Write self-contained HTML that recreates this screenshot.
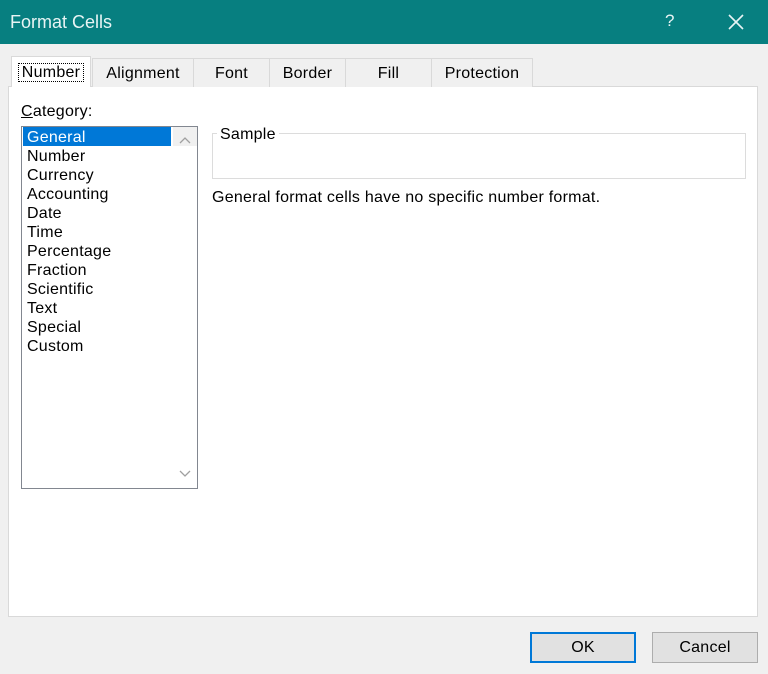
<!DOCTYPE html>
<html><head><meta charset="utf-8"><style>
*{margin:0;padding:0;box-sizing:border-box}
body{width:768px;height:674px;background:#f0f0f0;font-family:"Liberation Sans",sans-serif;font-size:16px;letter-spacing:0.25px;color:#000;position:relative;overflow:hidden}
.title{position:absolute;left:0;top:0;width:768px;height:44px;background:#077f80;color:#e8f4f4;font-size:18px;letter-spacing:0}
.title .t{position:absolute;left:10px;top:12px}
.title .q{position:absolute;left:665px;top:11px;font-size:17px}
.title svg{position:absolute;left:728px;top:14px}
.panel{position:absolute;left:8px;top:86px;width:750px;height:531px;background:#fff;border:1px solid #d9d9d9}
.tab{position:absolute;top:58px;height:29px;border:1px solid #d9d9d9;border-bottom:none;background:#f0f0f0;text-align:center;line-height:30px;font-size:16px}
.tab.sel{top:56px;height:31px;background:#fff;z-index:2;line-height:31px}
.tab.sel span{border:1px dotted #000;padding:0 3px}
.abs{position:absolute}
.list{position:absolute;left:21px;top:126px;width:177px;height:363px;border:1px solid #828790;background:#fff}
.list div{height:19px;line-height:19px;padding-left:5px;padding-top:1px}
.list .s{background:#0078d7;color:#fff;width:148px;margin-left:1px;padding-left:4px}
.sb{position:absolute;right:0;top:0;width:24px;height:361px;background:#f0f0f0;padding:0 !important}
.btn{position:absolute;top:632px;height:31px;width:106px;background:#e1e1e1;border:1px solid #adadad;text-align:center;line-height:30px}
</style></head><body>
<div class="title"><span class="t">Format Cells</span><span class="q">?</span>
<svg width="16" height="16" viewBox="0 0 16 16"><path d="M1 1L15 15M15 1L1 15" stroke="#e8f4f4" stroke-width="1.6"/></svg></div>
<div class="panel"></div>
<div class="tab sel" style="left:11px;width:80px"><span>Number</span></div>
<div class="tab" style="left:92px;width:102px">Alignment</div>
<div class="tab" style="left:193px;width:77px">Font</div>
<div class="tab" style="left:269px;width:77px">Border</div>
<div class="tab" style="left:345px;width:87px">Fill</div>
<div class="tab" style="left:431px;width:102px">Protection</div>
<div class="abs" style="left:21px;top:103px"><u>C</u>ategory:</div>
<div class="list">
<div class="s">General</div><div>Number</div><div>Currency</div><div>Accounting</div><div>Date</div><div>Time</div><div>Percentage</div><div>Fraction</div><div>Scientific</div><div>Text</div><div>Special</div><div>Custom</div>
<div class="sb"><svg style="position:absolute;left:6px;top:9px" width="12" height="8"><path d="M1 7L6 2L11 7" stroke="#a0a0a0" fill="none" stroke-width="1.3"/></svg>
<svg style="position:absolute;left:6px;top:343px" width="12" height="8"><path d="M1 1L6 6L11 1" stroke="#a0a0a0" fill="none" stroke-width="1.3"/></svg></div>
</div>
<div class="abs" style="left:212px;top:133px;width:534px;height:46px;border:1px solid #dcdcdc"></div>
<div class="abs" style="left:217px;top:126px;background:#fff;padding:0 3px">Sample</div>
<div class="abs" style="left:212px;top:189px">General format cells have no specific number format.</div>
<div class="btn" style="left:530px;border:2px solid #0078d7;line-height:28px">OK</div>
<div class="btn" style="left:652px">Cancel</div>
</body></html>
